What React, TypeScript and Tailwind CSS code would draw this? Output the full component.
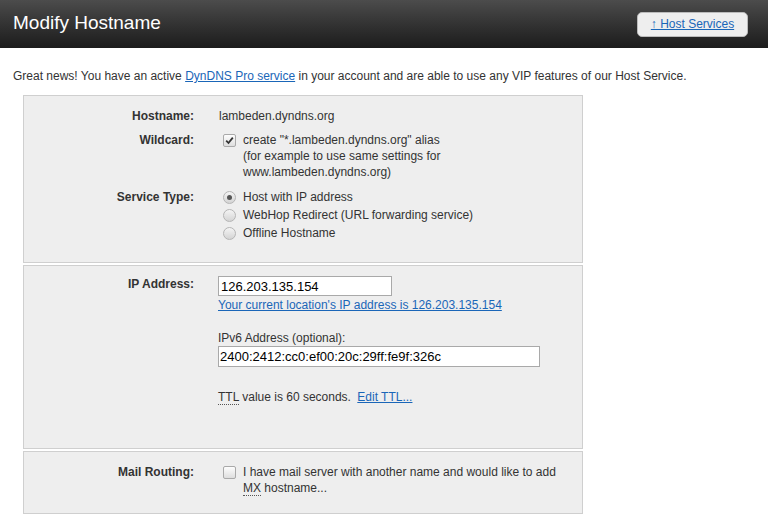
import React from "react";

const font = { fontFamily: '"Liberation Sans", Arial, sans-serif' };

function Checkbox({ checked }: { checked?: boolean }) {
  return (
    <span className="mt-[2px] flex h-[13px] w-[13px] shrink-0 items-center justify-center rounded-[2px] border border-[#a9a9a9] bg-gradient-to-b from-[#fdfdfd] to-[#dedede]">
      {checked && (
        <svg width="9" height="9" viewBox="0 0 9 9">
          <path d="M1.2 4.6 L3.5 7 L7.8 1.6" fill="none" stroke="#333" strokeWidth="1.8" />
        </svg>
      )}
    </span>
  );
}

function Radio({ checked }: { checked?: boolean }) {
  return (
    <span className="mt-[2px] flex h-[13px] w-[13px] shrink-0 items-center justify-center rounded-full border border-[#b5b5b5] bg-gradient-to-b from-[#f4f4f4] to-[#d4d4d4]">
      {checked && <span className="h-[5px] w-[5px] rounded-full bg-[#555]" />}
    </span>
  );
}

function Row({ label, children, className = "" }: { label: string; children: React.ReactNode; className?: string }) {
  return (
    <div className={`flex ${className}`}>
      <div className="w-[170px] shrink-0 text-right font-bold text-[#333]">{label}</div>
      <div className="ml-[25px] flex-1">{children}</div>
    </div>
  );
}

export default function App() {
  return (
    <div className="min-h-[514px] bg-white text-[12px] leading-[16px] text-[#333]" style={font}>
      <header className="flex h-[48px] items-center justify-between bg-gradient-to-b from-[#4c4c4c] to-[#1c1c1c] pl-[13px] pr-[20px]">
        <h1 className="-mt-[3px] text-[19px] text-white">Modify Hostname</h1>
        <button className="flex h-[25px] w-[111px] items-center justify-center rounded-[5px] border border-[#bbb] bg-[#eeeeee]">
          <a href="#" className="text-[12px] text-[#1a66b8] underline">↑ Host Services</a>
        </button>
      </header>

      <p className="pl-[13px] pt-[20px]">
        Great news! You have an active <a href="#" className="text-[#1a66b8] underline">DynDNS Pro service</a> in your account and are able to use any VIP features of our Host Service.
      </p>

      <div className="ml-[23px] mt-[11px] w-[560px]">
        <section className="h-[168px] border border-[#cfcfcf] bg-[#eeeeee] pt-[12px]">
          <Row label="Hostname:">
            <span>lambeden.dyndns.org</span>
          </Row>
          <Row label="Wildcard:" className="mt-[8px]">
            <div className="ml-[4px] flex gap-[7px]">
              <Checkbox checked />
              <div>
                create "*.lambeden.dyndns.org" alias
                <br />
                (for example to use same settings for
                <br />
                www.lambeden.dyndns.org)
              </div>
            </div>
          </Row>
          <Row label="Service Type:" className="mt-[9px]">
            <div className="ml-[4px] flex flex-col gap-[2px]">
              <label className="flex gap-[7px]"><Radio checked />Host with IP address</label>
              <label className="flex gap-[7px]"><Radio />WebHop Redirect (URL forwarding service)</label>
              <label className="flex gap-[7px]"><Radio />Offline Hostname</label>
            </div>
          </Row>
        </section>

        <section className="mt-[2px] h-[184px] border border-[#cfcfcf] bg-[#eeeeee] pt-[10px]">
          <Row label="IP Address:">
            <div className="-ml-[1px]">
              <input
                readOnly
                value="126.203.135.154"
                className="h-[20px] w-[174px] border border-[#a9a9a9] bg-white px-[2px] text-[13px] text-black outline-none"
                style={font}
              />
              <div className="mt-[1px]">
                <a href="#" className="text-[#1a66b8] underline">Your current location's IP address is 126.203.135.154</a>
              </div>
              <div className="mt-[17px]">IPv6 Address (optional):</div>
              <input
                readOnly
                value="2400:2412:cc0:ef00:20c:29ff:fe9f:326c"
                className="h-[21px] w-[322px] border border-[#a9a9a9] bg-white px-[1px] text-[13px] text-black outline-none"
                style={font}
              />
              <div className="mt-[22px]">
                <abbr className="border-b border-dotted border-[#555] no-underline">TTL</abbr> value is 60 seconds.{" "}
                <a href="#" className="ml-[3px] text-[#1a66b8] underline">Edit TTL...</a>
              </div>
            </div>
          </Row>
        </section>

        <section className="mt-[2px] h-[63px] border border-[#cfcfcf] bg-[#eeeeee] pt-[12px]">
          <Row label="Mail Routing:">
            <div className="ml-[4px] flex gap-[7px]">
              <Checkbox />
              <div>
                I have mail server with another name and would like to add
                <br />
                <abbr className="border-b border-dotted border-[#555] no-underline">MX</abbr> hostname...
              </div>
            </div>
          </Row>
        </section>
      </div>
    </div>
  );
}
